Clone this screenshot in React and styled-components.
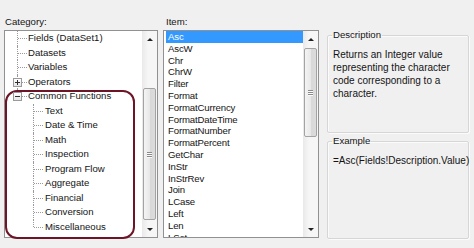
import React from "react";
import styled, { createGlobalStyle, css } from "styled-components";

const GlobalStyle = createGlobalStyle`
  html, body {
    margin: 0;
    padding: 0;
    background: #f0f0f0;
  }
  body {
    font-family: "Liberation Sans", Arial, sans-serif;
  }
`;

const categories = [
  { label: "Fields (DataSet1)", level: 0 },
  { label: "Datasets", level: 0 },
  { label: "Variables", level: 0 },
  { label: "Operators", level: 0, expander: "plus" },
  { label: "Common Functions", level: 0, expander: "minus", last: true },
  { label: "Text", level: 1 },
  { label: "Date & Time", level: 1 },
  { label: "Math", level: 1 },
  { label: "Inspection", level: 1 },
  { label: "Program Flow", level: 1 },
  { label: "Aggregate", level: 1 },
  { label: "Financial", level: 1 },
  { label: "Conversion", level: 1 },
  { label: "Miscellaneous", level: 1, last: true },
];

const items = [
  "Asc", "AscW", "Chr", "ChrW", "Filter", "Format", "FormatCurrency",
  "FormatDateTime", "FormatNumber", "FormatPercent", "GetChar", "InStr",
  "InStrRev", "Join", "LCase", "Left", "Len", "LSet",
];

const Dialog = styled.div`
  width: 474px;
  height: 248px;
  box-sizing: border-box;
  padding: 15px 0 0 4px;
  display: flex;
  align-items: flex-start;
  background: #f0f0f0;
  color: #141414;
  font-size: 9.6px;
  overflow: hidden;
`;

const Column = styled.div`
  display: flex;
  flex-direction: column;
  flex: none;
  width: ${(p) => p.$width}px;
  margin-right: ${(p) => p.$gap || 0}px;
`;

const Label = styled.div`
  height: 15px;
  line-height: 14px;
  padding-left: ${(p) => p.$indent || 1}px;
`;

const Box = styled.div`
  position: relative;
  display: flex;
  height: 208px;
  box-sizing: border-box;
  border: 1px solid #8f9193;
  background: #fff;
`;

const Content = styled.div`
  flex: 1;
  overflow: hidden;
  padding-top: ${(p) => p.$top || 0}px;
`;

const dotted = "1px dotted #9a9a9a";

const TreeRow = styled.div`
  position: relative;
  height: 14.5px;
  line-height: 14.5px;
  white-space: nowrap;
  padding-left: ${(p) => (p.$level ? 40 : 23)}px;

  &::before {
    content: "";
    position: absolute;
    left: ${(p) => (p.$level ? 28 : 12)}px;
    top: ${(p) => (p.$first ? -6 : 0)}px;
    bottom: ${(p) => (p.$last ? "50%" : "0")};
    border-left: ${dotted};
  }

  &::after {
    content: "";
    position: absolute;
    left: ${(p) => (p.$level ? 29 : 13)}px;
    width: 9px;
    top: 50%;
    border-top: ${dotted};
  }
`;

const Expander = styled.span`
  position: absolute;
  z-index: 1;
  left: 8px;
  top: 3px;
  width: 7px;
  height: 7px;
  border: 1px solid #9a9a9a;
  background: linear-gradient(#ffffff, #e6e6e6);

  &::before {
    content: "";
    position: absolute;
    left: 1px;
    top: 3px;
    width: 5px;
    height: 1px;
    background: #303030;
  }

  ${(p) =>
    p.$plus &&
    css`
      &::after {
        content: "";
        position: absolute;
        left: 3px;
        top: 1px;
        width: 1px;
        height: 5px;
        background: #303030;
      }
    `}
`;

const Scrollbar = styled.div`
  flex: none;
  width: 15px;
  display: flex;
  flex-direction: column;
  background: linear-gradient(to right, #e9e9e9, #f6f6f6 40%, #f6f6f6);
`;

const ScrollButton = styled.div`
  flex: none;
  height: 16px;
  display: flex;
  align-items: center;
  justify-content: center;

  &::before {
    content: "";
    width: 0;
    height: 0;
    border-left: 3px solid transparent;
    border-right: 3px solid transparent;
    ${(p) =>
      p.$down
        ? css`border-top: 3px solid #222;`
        : css`border-bottom: 3px solid #222;`}
  }
`;

const TrackSpace = styled.div`
  flex: ${(p) => (p.$fill ? 1 : "none")};
  height: ${(p) => p.$size || 0}px;
`;

const Thumb = styled.div`
  flex: none;
  height: ${(p) => p.$size}px;
  margin: 0 1px;
  box-sizing: border-box;
  border: 1px solid #a3a3a3;
  border-radius: 2px;
  background: linear-gradient(to right, #f4f4f4, #e8e8e8 50%, #d8d8d8 51%, #dcdcdc);
  display: flex;
  flex-direction: column;
  align-items: center;
  justify-content: center;
  gap: 1px;
`;

const Grip = styled.span`
  width: 5px;
  height: 1px;
  background: #8a8a8a;
  box-shadow: 0 1px 0 #fafafa;
`;

const Annotation = styled.div`
  position: absolute;
  left: 0;
  top: 59px;
  width: 130px;
  height: 149px;
  box-sizing: border-box;
  border: 2.5px solid #6d1526;
  border-radius: 12px;
  pointer-events: none;
`;

const ListRow = styled.div`
  height: 11.8px;
  line-height: 11.8px;
  white-space: nowrap;
  padding-left: 2px;
  margin-left: 2px;
  letter-spacing: -0.15px;
  ${(p) =>
    p.$selected &&
    css`
      background: #3399ff;
      color: #fff;
    `}
`;

const Group = styled.fieldset`
  margin: 0;
  min-width: 0;
  height: ${(p) => p.$height}px;
  box-sizing: border-box;
  padding: 0 5px;
  border: 1px solid #d6d6d6;
  box-shadow: inset 1px 1px 0 #fbfbfb, 1px 1px 0 #fbfbfb;
  border-radius: 2px;
  margin-bottom: ${(p) => p.$gap || 0}px;
`;

const Legend = styled.legend`
  padding: 0 1px;
  margin-left: -1px;
  font-size: 9.6px;
  line-height: 12px;
`;

const GroupText = styled.div`
  padding-top: 7px;
  font-size: 10px;
  line-height: 13px;
`;

const ScrollBarView = ({ top, size }) => (
  <Scrollbar>
    <ScrollButton />
    <TrackSpace $size={top} />
    <Thumb $size={size}>
      <Grip />
      <Grip />
      <Grip />
    </Thumb>
    <TrackSpace $fill />
    <ScrollButton $down />
  </Scrollbar>
);

export default function App() {
  return (
    <>
      <GlobalStyle />
      <Dialog>
        <Column $width={154} $gap={5}>
          <Label>Category:</Label>
          <Box>
            <Content>
              {categories.map((c, i) => (
                <TreeRow
                  key={c.label}
                  $level={c.level}
                  $last={c.last}
                  $first={i === 0}
                >
                  {c.expander && <Expander $plus={c.expander === "plus"} />}
                  {c.label}
                </TreeRow>
              ))}
            </Content>
            <ScrollBarView top={41} size={132} />
            <Annotation />
          </Box>
        </Column>

        <Column $width={156} $gap={8}>
          <Label $indent={3}>Item:</Label>
          <Box>
            <Content>
              {items.map((it, i) => (
                <ListRow key={it} $selected={i === 0}>
                  {it}
                </ListRow>
              ))}
            </Content>
            <ScrollBarView top={1} size={89} />
          </Box>
        </Column>

        <Column $width={142}>
          <TrackSpace $size={14} />
          <Group $height={104} $gap={2}>
            <Legend>Description</Legend>
            <GroupText>
              Returns an Integer value
              <br />
              representing the character
              <br />
              code corresponding to a
              <br />
              character.
            </GroupText>
          </Group>
          <Group $height={104}>
            <Legend>Example</Legend>
            <GroupText>=Asc(Fields!Description.Value)</GroupText>
          </Group>
        </Column>
      </Dialog>
    </>
  );
}
